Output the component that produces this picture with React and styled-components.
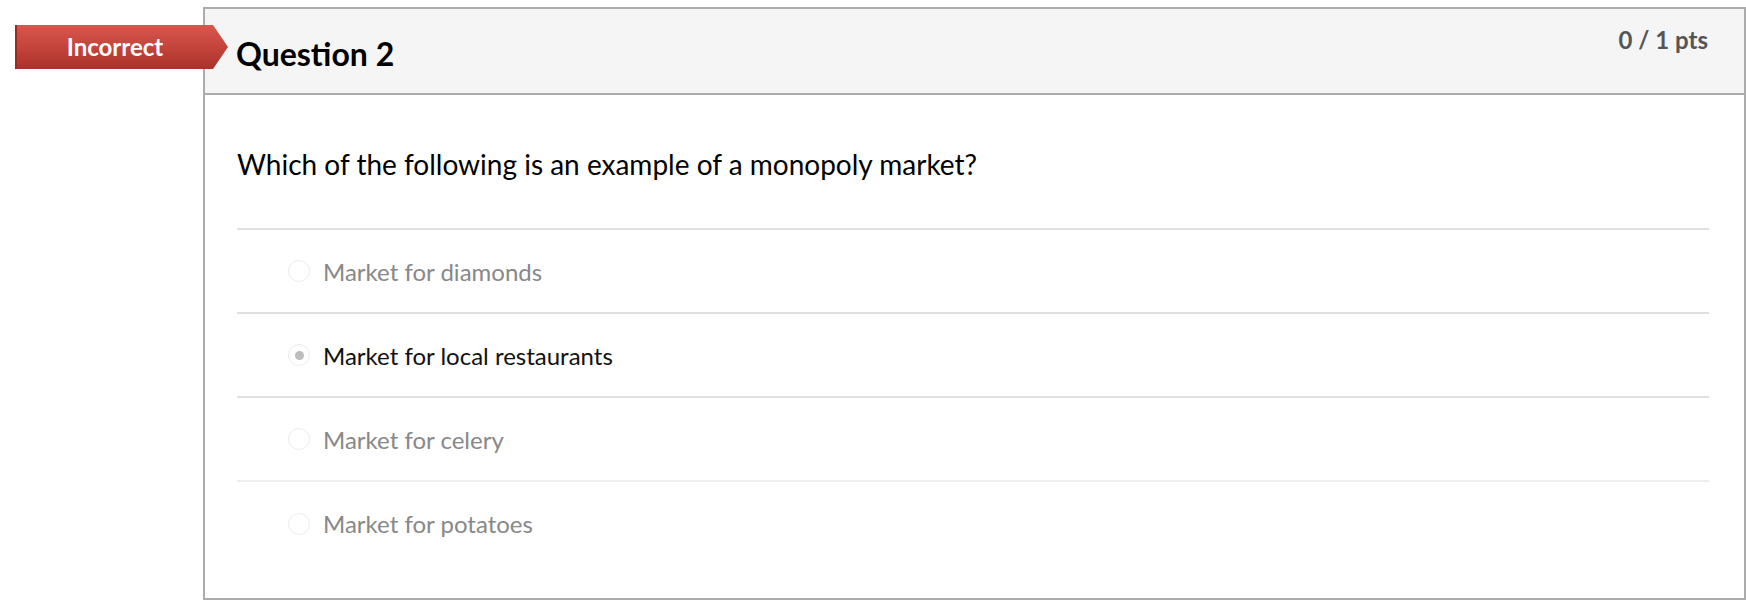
import React from "react";
import styled, { createGlobalStyle } from "styled-components";

const GlobalStyle = createGlobalStyle`
  html, body { margin: 0; padding: 0; background: #fff; }
  body { font-family: Lato, "Open Sans", sans-serif; color: #000; }
  * { box-sizing: border-box; }
`;

const Page = styled.div`
  position: relative;
  padding: 7px 0 1px 203px;
  width: 1746px;
`;

const Badge = styled.div`
  position: absolute;
  left: 15px;
  top: 25px;
  width: 213px;
  height: 44px;
  padding-right: 15px;
  display: flex;
  align-items: center;
  justify-content: center;
  clip-path: polygon(0 0, 198px 0, 213px 22px, 198px 44px, 0 44px);
  background: linear-gradient(to bottom, #d8574e 0%, #c4443b 50%, #a9322a 100%);
  border-left: 2px solid #9b2a23;
  color: #fff;
  font-weight: 700;
  font-size: 24px;
  padding-bottom: 2px;
  z-index: 2;
`;

const Card = styled.section`
  border: 2px solid #ababab;
  background: #fff;
`;

const Header = styled.header`
  height: 86px;
  display: flex;
  justify-content: space-between;
  align-items: flex-start;
  background: #f5f5f5;
  border-bottom: 2px solid #ababab;
  padding: 0 36px 0 31px;
`;

const Title = styled.h2`
  margin: 0;
  padding-top: 27px;
  font-size: 32px;
  font-weight: 700;
  line-height: 36px;
  color: #000;
`;

const Points = styled.div`
  padding-top: 17px;
  font-size: 24px;
  font-weight: 700;
  line-height: 28px;
  color: #555;
`;

const Body = styled.div`
  padding: 52px 35px 33px 32px;
`;

const Prompt = styled.p`
  margin: 0 0 47px 0;
  font-size: 28px;
  line-height: 34px;
  color: #000;
`;

const Options = styled.ul`
  list-style: none;
  margin: 0;
  padding: 0;
`;

const Option = styled.li`
  height: ${(p) => (p.$last ? 85 : 84)}px;
  display: flex;
  align-items: center;
  gap: 13px;
  padding: 0 0 0 51px;
  border-top: 2px solid ${(p) => (p.$light ? "#eeeeee" : "#e0e0e0")};
  font-size: 24px;
  color: ${(p) => (p.$selected ? "#111" : "#888")};
`;

const Radio = styled.span`
  width: 22px;
  height: 22px;
  border-radius: 50%;
  border: 1px solid #ececec;
  background: #fff;
  display: flex;
  align-items: center;
  justify-content: center;
  flex-shrink: 0;
  &::after {
    content: "";
    display: ${(p) => (p.$checked ? "block" : "none")};
    width: 9px;
    height: 9px;
    border-radius: 50%;
    background: #bdbdbd;
  }
`;

const answers = [
  { text: "Market for diamonds", selected: false },
  { text: "Market for local restaurants", selected: true },
  { text: "Market for celery", selected: false },
  { text: "Market for potatoes", selected: false },
];

export default function App() {
  return (
    <>
      <GlobalStyle />
      <Page>
        <Badge>Incorrect</Badge>
        <Card>
          <Header>
            <Title>Question 2</Title>
            <Points>0 / 1 pts</Points>
          </Header>
          <Body>
            <Prompt>Which of the following is an example of a monopoly market?</Prompt>
            <Options>
              {answers.map((a, i) => (
                <Option key={a.text} $selected={a.selected} $light={i === 3} $last={i === 3}>
                  <Radio $checked={a.selected} />
                  {a.text}
                </Option>
              ))}
            </Options>
          </Body>
        </Card>
      </Page>
    </>
  );
}
